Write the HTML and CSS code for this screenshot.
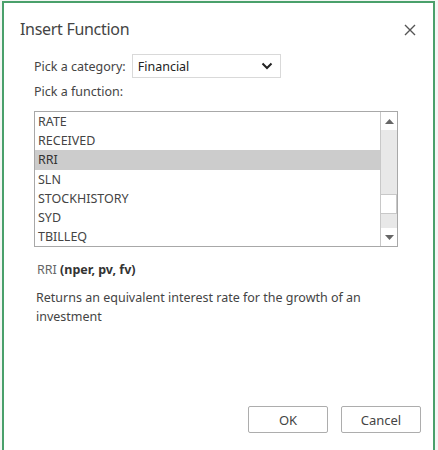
FILE: index.html
```html
<!DOCTYPE html>
<html>
<head>
<meta charset="utf-8">
<link rel="stylesheet" href="styles.css">
</head>
<body>
<div class="dialog">
  <div class="header">
    <div class="title">Insert Function</div>
    <div class="close">
      <svg width="12" height="12" viewBox="0 0 12 12"><path d="M1 1L11 11M11 1L1 11" stroke="#555" stroke-width="1.4" fill="none"/></svg>
    </div>
  </div>
  <div class="content">
    <div class="cat-row">
      <span class="label">Pick a category:</span>
      <div class="select">
        <span>Financial</span>
        <svg width="12" height="8" viewBox="0 0 12 8"><path d="M1.5 1.5L6 6L10.5 1.5" stroke="#222" stroke-width="2" fill="none"/></svg>
      </div>
    </div>
    <div class="label fn-label">Pick a function:</div>
    <div class="listbox">
      <div class="items">
        <div class="item">RATE</div>
        <div class="item">RECEIVED</div>
        <div class="item selected">RRI</div>
        <div class="item">SLN</div>
        <div class="item">STOCKHISTORY</div>
        <div class="item">SYD</div>
        <div class="item">TBILLEQ</div>
      </div>
      <div class="scrollbar">
        <div class="arrow"><svg width="9" height="5" viewBox="0 0 9 5"><path d="M0 5L4.5 0L9 5Z" fill="#666"/></svg></div>
        <div class="track">
          <div class="track-top"></div>
          <div class="thumb"></div>
          <div class="track-bottom"></div>
        </div>
        <div class="arrow"><svg width="9" height="5" viewBox="0 0 9 5"><path d="M0 0L4.5 5L9 0Z" fill="#666"/></svg></div>
      </div>
    </div>
    <div class="signature"><span class="fname">RRI</span> <b>(nper, pv, fv)</b></div>
    <div class="desc">Returns an equivalent interest rate for the growth of an investment</div>
  </div>
  <div class="footer">
    <button class="btn">OK</button>
    <button class="btn">Cancel</button>
  </div>
</div>
</body>
</html>
```
FILE: styles.css
```css
html, body {
  margin: 0;
  padding: 0;
}
body {
  width: 438px;
  height: 450px;
  overflow: hidden;
  background: #f4f6f4;
  font-family: "Noto Sans", "Open Sans", sans-serif;
  color: #444;
  padding: 1px 0 0 2px;
  box-sizing: border-box;
}
.dialog {
  width: 433px;
  height: 460px;
  box-sizing: border-box;
  background: #fff;
  border: 2px solid #4aa06b;
  border-bottom: none;
  display: flex;
  flex-direction: column;
}
.header {
  display: flex;
  justify-content: space-between;
  align-items: center;
  padding: 11px 17px 0 16px;
  height: 30px;
}
.title {
  font-size: 16px;
  color: #444;
  letter-spacing: -0.3px;
}
.close {
  display: flex;
  align-items: center;
  padding-top: 1px;
}
.content {
  padding: 10px 0 0 30px;
  font-size: 12.5px;
}
.cat-row {
  display: flex;
  align-items: center;
  gap: 6px;
}
.label {
  color: #444;
}
.select {
  width: 149px;
  height: 24px;
  box-sizing: border-box;
  border: 1px solid #d9d9d9;
  display: flex;
  align-items: center;
  justify-content: space-between;
  padding: 0 7px 0 5px;
  color: #222;
}
.fn-label {
  margin-top: 5px;
  height: 28px;
}
.listbox {
  width: 364px;
  height: 136px;
  box-sizing: border-box;
  border: 1px solid #a8a8a8;
  display: flex;
  overflow: hidden;
}
.items {
  flex: 1;
}
.item {
  height: 19.2px;
  line-height: 19px;
  padding-left: 3px;
  color: #444;
}
.item.selected {
  background: #cccccc;
  color: #333;
}
.scrollbar {
  width: 16px;
  border-left: 1px solid #c8c8c8;
  display: flex;
  flex-direction: column;
  background: #e8e8e8;
}
.arrow {
  height: 18px;
  background: #fff;
  display: flex;
  align-items: center;
  justify-content: center;
}
.track {
  flex: 1;
  display: flex;
  flex-direction: column;
}
.track-top {
  flex: 1;
}
.thumb {
  height: 18px;
  background: #fff;
  border: 1px solid #c8c8c8;
  border-left: none;
}
.track-bottom {
  height: 14px;
}
.signature {
  margin-top: 14px;
  height: 20px;
  font-size: 12.5px;
  padding-left: 3px;
}
.fname {
  color: #666;
}
.signature b {
  color: #333;
}
.desc {
  margin-top: 7px;
  width: 340px;
  line-height: 19px;
  padding-left: 2px;
}
.footer {
  margin-top: auto;
  display: flex;
  justify-content: flex-end;
  gap: 13px;
  padding: 0 12px 28px 0;
}
.btn {
  width: 80px;
  height: 27px;
  background: #fff;
  border: 1px solid #adadad;
  border-radius: 2px;
  font-family: "Noto Sans", "Open Sans", sans-serif;
  font-size: 13px;
  color: #444;
}
```
